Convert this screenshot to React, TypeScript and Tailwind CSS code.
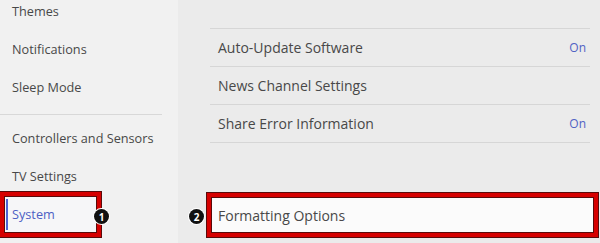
import React from "react";

const leftTop = ["Themes", "Notifications", "Sleep Mode"];

function Badge({ n }: { n: string }) {
  return (
    <span className="flex h-[15px] w-[15px] items-center justify-center rounded-full bg-[#111] text-[10px] font-bold leading-none text-white shadow-[0_0_0_1px_#ffffff]">
      {n}
    </span>
  );
}

function Row({ label, value }: { label: string; value?: string }) {
  return (
    <div className="flex h-[38px] items-center justify-between border-b border-[#d6d6d6] pl-[8px] pr-[4px]">
      <span>{label}</span>
      {value && <span className="text-[12px] text-[#5062c4]">{value}</span>}
    </div>
  );
}

export default function App() {
  return (
    <div
      className="flex h-[243px] w-[600px] overflow-hidden text-[#484848]"
      style={{ fontFamily: '"Open Sans", "Noto Sans", sans-serif' }}
    >
      {/* sidebar */}
      <div className="flex w-[178px] shrink-0 flex-col bg-[#f1f1f1] text-[12.7px]">
        <div className="-mt-[7px] flex flex-col">
          {leftTop.map((t) => (
            <div key={t} className="flex h-[38px] items-center pl-[12px]">
              {t}
            </div>
          ))}
        </div>
        <div className="mr-[16px] mt-[7px] border-t border-[#d8d8d8]" />
        <div className="mt-[5px] flex h-[38px] items-center pl-[12px]">
          Controllers and Sensors
        </div>
        <div className="flex h-[34px] items-center pl-[12px] pt-[4px]">
          TV Settings
        </div>
        <div className="relative flex h-[45px] w-[101px] items-center border-[4px] border-[#d60000] bg-[#f6f6f8] shadow-[inset_0_0_0_1px_#5a0a0a,0_0_0_1px_#5a0a0a]">
          <span className="ml-[2px] h-[31px] w-[2px] bg-[#4d62d4]" />
          <span className="ml-[4px] text-[#4d5fc4]">System</span>
          <span className="absolute -right-[12px] top-[13px]">
            <Badge n="1" />
          </span>
        </div>
      </div>

      {/* content */}
      <div className="flex flex-1 flex-col bg-[#ebebeb] pl-[29px] pr-[2px] text-[14px]">
        <div className="ml-[3px] mr-[8px] mt-[28px] border-t border-[#d6d6d6]">
          <Row label="Auto-Update Software" value="On" />
          <Row label="News Channel Settings" />
          <Row label="Share Error Information" value="On" />
        </div>
        <div className="relative mt-[50px] flex h-[44px] items-center border-[4px] border-[#d60000] bg-[#fbfbfb] pl-[7px] shadow-[inset_0_0_0_1px_#5a0a0a,0_0_0_1px_#5a0a0a]">
          <span>Formatting Options</span>
          <span className="absolute -left-[22px] top-[12px]">
            <Badge n="2" />
          </span>
        </div>
      </div>
    </div>
  );
}
